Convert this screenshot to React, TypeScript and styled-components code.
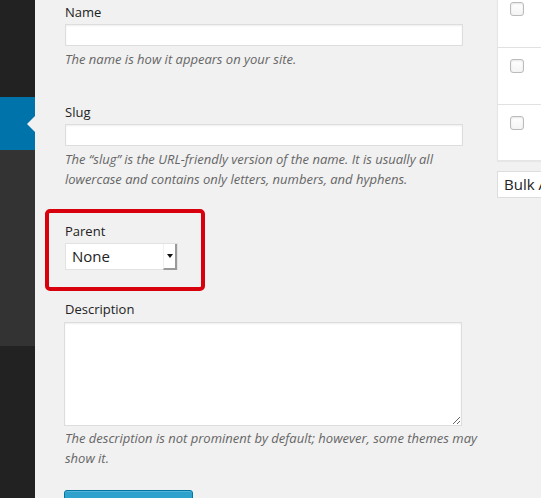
import React from 'react';
import styled, { createGlobalStyle } from 'styled-components';

const GlobalStyle = createGlobalStyle`
  html, body {
    margin: 0;
    padding: 0;
    background: #f1f1f1;
    overflow: hidden;
  }
  body {
    font-family: "Open Sans", "Liberation Sans", sans-serif;
    font-size: 13px;
    color: #333;
  }
`;

const Screen = styled.div`
  display: flex;
  width: 541px;
  height: 498px;
  overflow: hidden;
  background: #f1f1f1;
`;

// 좌측 관리 메뉴
const Sidebar = styled.div`
  display: flex;
  flex-direction: column;
  flex: 0 0 35px;
  background: #222;
`;

const MenuBlock = styled.div<{ $h: number; $bg: string }>`
  flex: 0 0 ${p => p.$h}px;
  background: ${p => p.$bg};
`;

const ActiveItem = styled.div`
  position: relative;
  flex: 0 0 53px;
  background: #0073aa;

  &::after {
    content: '';
    position: absolute;
    right: 0;
    top: 19px;
    border-style: solid;
    border-width: 8px 8px 8px 0;
    border-color: transparent #f1f1f1 transparent transparent;
  }
`;

const Main = styled.div`
  display: flex;
  flex: 1;
  padding-left: 10px;
  min-width: 0;
`;

const FormCol = styled.div`
  flex: 0 0 452px;
  display: flex;
  flex-direction: column;
  padding-top: 3px;
`;

const Field = styled.div<{ $gap?: number }>`
  display: flex;
  flex-direction: column;
  margin-left: 20px;
  margin-top: ${p => p.$gap ?? 0}px;
`;

const Label = styled.label`
  display: block;
  font-size: 13px;
  line-height: 18px;
  color: #222;
`;

const TextInput = styled.input`
  box-sizing: border-box;
  width: 398px;
  height: 22px;
  margin: 3px 0 0;
  padding: 3px 5px;
  border: 1px solid #ddd;
  background: #fff;
  box-shadow: inset 0 1px 2px rgba(0, 0, 0, 0.07);
  font-family: inherit;
  font-size: 13px;
  outline: none;
`;

const Help = styled.p<{ $top?: number }>`
  margin: ${p => p.$top ?? 3}px 0 0;
  width: 420px;
  font-style: italic;
  font-size: 13px;
  line-height: 20px;
  color: #666;
`;

const Highlight = styled.div`
  box-sizing: border-box;
  width: 160px;
  margin-top: 20px;
  padding: 9px 0 17px 16px;
  border: 4px solid #d9000d;
  border-radius: 5px;
`;

const SelectBox = styled.div`
  box-sizing: border-box;
  display: flex;
  width: 113px;
  height: 27px;
  margin-top: 3px;
  background: #fff;
  border: 1px solid #e2e2e2;
`;

const SelectValue = styled.span`
  flex: 1;
  padding-left: 6px;
  font-size: 15px;
  line-height: 25px;
  color: #222;
`;

const SelectArrow = styled.span`
  box-sizing: border-box;
  display: flex;
  align-items: center;
  justify-content: center;
  flex: 0 0 14px;
  border-left: 1px solid #f0f0f0;
  border-right: 2px solid #9a9a9a;
  border-bottom: 2px solid #9a9a9a;
  margin-bottom: -1px;

  &::before {
    content: '';
    border-style: solid;
    border-width: 4px 3px 0 3px;
    border-color: #111 transparent transparent transparent;
  }
`;

const TextArea = styled.textarea`
  box-sizing: border-box;
  display: block;
  width: 398px;
  height: 104px;
  margin: 4px 0 0 -1px;
  padding: 3px 5px;
  border: 1px solid #ddd;
  background: #fff;
  box-shadow: inset 0 1px 2px rgba(0, 0, 0, 0.07);
  font-family: inherit;
  font-size: 13px;
  outline: none;
`;

const SubmitButton = styled.button`
  box-sizing: border-box;
  width: 129px;
  height: 28px;
  margin: 22px 0 0 -1px;
  padding: 0 10px 1px;
  background: #2ea2cc;
  border: 1px solid #0074a2;
  border-radius: 3px;
  box-shadow: inset 0 1px 0 rgba(120, 200, 230, 0.5);
  color: #fff;
  font-family: inherit;
  font-size: 13px;
  line-height: 26px;
`;

// 우측 목록
const RightCol = styled.div`
  flex: 0 0 300px;
  display: flex;
  flex-direction: column;
`;

const ListTable = styled.div`
  margin-top: -10px;
  background: #fff;
  border: 1px solid #e5e5e5;
  box-shadow: 0 1px 1px rgba(0, 0, 0, 0.04);
`;

const Row = styled.div`
  box-sizing: border-box;
  height: 57px;
  padding: 11px 0 0 12px;
  border-bottom: 1px solid #e1e1e1;

  &:last-child {
    height: 55px;
    border-bottom: none;
  }
`;

const Check = styled.span`
  box-sizing: border-box;
  display: block;
  width: 14px;
  height: 14px;
  border: 1px solid #bbb;
  border-radius: 3px;
  background: linear-gradient(#fff, #f4f4f4);
  box-shadow: inset 0 1px 2px rgba(0, 0, 0, 0.1);
`;

const BulkSelect = styled.div`
  box-sizing: border-box;
  width: 140px;
  height: 27px;
  margin-top: 10px;
  padding-left: 6px;
  background: #fff;
  border: 1px solid #ddd;
  font-size: 15px;
  line-height: 25px;
  color: #222;
  white-space: nowrap;
`;

const App = () => {
  return (
    <>
      <GlobalStyle />
      <Screen>
        <Sidebar>
          <MenuBlock $h={97} $bg="#222" />
          <ActiveItem />
          <MenuBlock $h={196} $bg="#333" />
        </Sidebar>
        <Main>
          <FormCol>
            <Field>
              <Label>Name</Label>
              <TextInput type="text" />
              <Help>The name is how it appears on your site.</Help>
            </Field>
            <Field $gap={34}>
              <Label>Slug</Label>
              <TextInput type="text" />
              <Help>
                The &ldquo;slug&rdquo; is the URL-friendly version of the name. It is usually all
                lowercase and contains only letters, numbers, and hyphens.
              </Help>
            </Field>
            <Highlight>
              <Label>Parent</Label>
              <SelectBox>
                <SelectValue>None</SelectValue>
                <SelectArrow />
              </SelectBox>
            </Highlight>
            <Field $gap={9}>
              <Label>Description</Label>
              <TextArea />
              <Help $top={2}>
                The description is not prominent by default; however, some themes may show it.
              </Help>
              <SubmitButton>Add New Category</SubmitButton>
            </Field>
          </FormCol>
          <RightCol>
            <ListTable>
              <Row><Check /></Row>
              <Row><Check /></Row>
              <Row><Check /></Row>
            </ListTable>
            <BulkSelect>Bulk Actions</BulkSelect>
          </RightCol>
        </Main>
      </Screen>
    </>
  );
};

export default App;
